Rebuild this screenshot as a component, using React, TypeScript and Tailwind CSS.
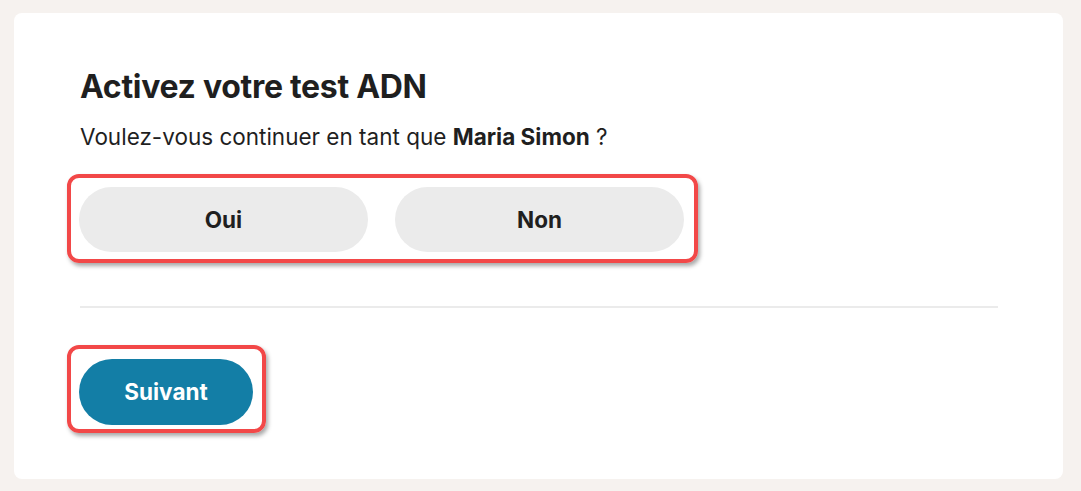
import React from "react";

export default function App() {
  return (
    <div
      className="w-[1081px] h-[491px] bg-[#f6f2ef] pt-[13px] pl-[14px]"
      style={{ fontFamily: "Inter, 'Liberation Sans', sans-serif" }}
    >
      <div className="w-[1049px] h-[466px] bg-white rounded-[8px] pl-[66px] pt-[56px]">
        <h1 className="text-[32px] leading-[36px] font-bold text-[#1f1f1f] tracking-[-0.3px]">
          Activez votre test ADN
        </h1>
        <p className="mt-[18px] text-[22.5px] leading-[28px] text-[#1f1f1f]">
          Voulez-vous continuer en tant que <span className="font-bold">Maria Simon</span> ?
        </p>
        <div className="mt-[23px] -ml-[13px] w-[631px] h-[89px] border-4 border-[#f24848] rounded-[12px] shadow-[2px_3px_4px_rgba(0,0,0,0.35)] pl-[8px] pt-[9px] flex gap-[27px]">
          <button className="w-[289px] h-[65px] rounded-full bg-[#ebebeb] text-[22.5px] font-bold text-[#1f1f1f]">
            Oui
          </button>
          <button className="w-[289px] h-[65px] rounded-full bg-[#ebebeb] text-[22.5px] font-bold text-[#1f1f1f]">
            Non
          </button>
        </div>
        <div className="mt-[43px] w-[918px] h-[2px] bg-[#ebebeb]" />
        <div className="mt-[37px] -ml-[13px] w-[199px] h-[88px] border-4 border-[#f24848] rounded-[12px] shadow-[2px_3px_4px_rgba(0,0,0,0.35)] pl-[8px] pt-[10px]">
          <button className="w-[174px] h-[66px] rounded-full bg-[#137ea6] text-[22.5px] font-bold text-white">
            Suivant
          </button>
        </div>
      </div>
    </div>
  );
}
